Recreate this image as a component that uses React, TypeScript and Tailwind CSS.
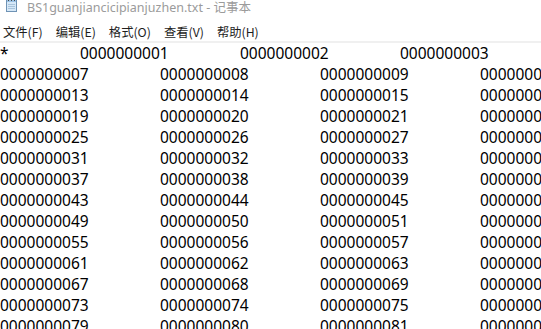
import React from "react";

const pad = (n: number) => String(n).padStart(10, "0");

function NotepadIcon() {
  return (
    <svg width="13" height="15" viewBox="0 0 13 15" className="block">
      <rect x="1.5" y="1.5" width="10" height="12" fill="#d6e8f7" stroke="#6f93b5" />
      <rect x="2" y="2" width="9" height="2" fill="#9cc3e6" />
      <line x1="3" y1="6.5" x2="10" y2="6.5" stroke="#a9c4dc" />
      <line x1="3" y1="8.5" x2="10" y2="8.5" stroke="#a9c4dc" />
      <line x1="3" y1="10.5" x2="10" y2="10.5" stroke="#a9c4dc" />
      <line x1="3.5" y1="0" x2="3.5" y2="3" stroke="#4a4a4a" />
      <line x1="6.5" y1="0" x2="6.5" y2="3" stroke="#4a4a4a" />
      <line x1="9.5" y1="0" x2="9.5" y2="3" stroke="#4a4a4a" />
    </svg>
  );
}

const menus = ["文件(F)", "编辑(E)", "格式(O)", "查看(V)", "帮助(H)"];

export default function App() {
  const rows: number[] = [];
  for (let k = 1; k <= 13; k++) rows.push(6 * k + 1);
  return (
    <div className="w-[541px] h-[329px] overflow-hidden bg-white">
      <div className="h-[22px] flex items-start">
        <div className="ml-[5px] -mt-[2px]">
          <NotepadIcon />
        </div>
        <div
          className="ml-[9px] mt-[-1px] text-[12.5px] leading-[18px] text-[#9b9b9b] whitespace-nowrap"
          style={{ fontFamily: '"Noto Sans", "Noto Sans CJK SC", sans-serif' }}
        >
          BS1guanjiancicipianjuzhen.txt - 记事本
        </div>
      </div>
      <div
        className="h-[19px] flex items-center pl-[3px] pt-[1px] gap-[13px] text-[12.3px] text-[#1e1e1e]"
        style={{ fontFamily: '"Noto Sans CJK SC", sans-serif' }}
      >
        {menus.map((m) => (
          <span key={m} className="whitespace-nowrap">
            {m}
          </span>
        ))}
      </div>
      <div className="h-[2px] bg-[#f0f0f0]" />
      <div
        className="text-[15.5px] leading-[21px] text-black whitespace-nowrap"
        style={{ fontFamily: '"Noto Sans", sans-serif' }}
      >
        <div className="flex h-[21px]">
          <span className="w-[80px] shrink-0">*</span>
          {[1, 2, 3, 4, 5, 6].map((n) => (
            <span key={n} className="w-[160px] shrink-0">
              {pad(n)}
            </span>
          ))}
        </div>
        {rows.map((s) => (
          <div key={s} className="flex h-[21px]">
            {[0, 1, 2, 3, 4, 5].map((i) => (
              <span key={i} className="w-[160px] shrink-0">
                {pad(s + i)}
              </span>
            ))}
          </div>
        ))}
      </div>
    </div>
  );
}
